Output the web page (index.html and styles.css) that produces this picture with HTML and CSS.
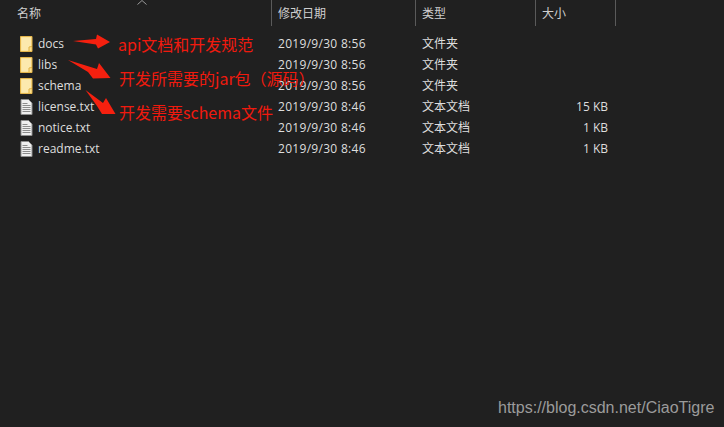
FILE: index.html
```html
<!DOCTYPE html>
<html lang="zh-CN">
<head>
<meta charset="utf-8">
<title>文件列表</title>
<link rel="stylesheet" href="styles.css">
</head>
<body>
<svg width="0" height="0" class="defs">
  <defs>
    <symbol id="folder" viewBox="0 0 13 16">
      <path d="M.5.5h11.500v15H.5z" fill="#fde08c" stroke="#e5b64c"/>
      <path d="M1.500 1.500h9.500v9.500l-2 1v2.500h-7.500z" fill="#fce9ae"/>
      <path d="M9 15v-4l3-.5" fill="none" stroke="#e0b040"/>
    </symbol>
    <symbol id="doc" viewBox="0 0 12 16">
      <path d="M.5.5h7.500l3.500 3.500v11.500h-11z" fill="#f0f0f0" stroke="#8e8e8e"/>
      <path d="M2 4.500h5M2 6.500h8M2 8.500h8M2 10.500h8M2 12.500h8" stroke="#8c8c8c"/>
    </symbol>
  </defs>
</svg>
<main class="explorer">
  <header class="head">
    <div class="hcell hname">名称</div>
    <div class="hcell">修改日期</div>
    <div class="hcell">类型</div>
    <div class="hcell">大小</div>
  </header>
  <svg class="chevron" width="10" height="5" viewBox="0 0 10 5"><path d="M.5 4.500L5 .5l4.500 4" fill="none" stroke="#9a9a9a"/></svg>
  <section class="rows">
    <div class="row"><div class="name"><svg class="ico"><use href="#folder"/></svg>docs</div><div class="cell date">2019/9/30 8:56</div><div class="cell">文件夹</div><div class="size"></div></div>
    <div class="row"><div class="name"><svg class="ico"><use href="#folder"/></svg>libs</div><div class="cell date">2019/9/30 8:56</div><div class="cell">文件夹</div><div class="size"></div></div>
    <div class="row"><div class="name"><svg class="ico"><use href="#folder"/></svg>schema</div><div class="cell date">2019/9/30 8:56</div><div class="cell">文件夹</div><div class="size"></div></div>
    <div class="row"><div class="name"><svg class="ico"><use href="#doc"/></svg>license.txt</div><div class="cell date">2019/9/30 8:46</div><div class="cell">文本文档</div><div class="size">15 KB</div></div>
    <div class="row"><div class="name"><svg class="ico"><use href="#doc"/></svg>notice.txt</div><div class="cell date">2019/9/30 8:46</div><div class="cell">文本文档</div><div class="size">1 KB</div></div>
    <div class="row"><div class="name"><svg class="ico"><use href="#doc"/></svg>readme.txt</div><div class="cell date">2019/9/30 8:46</div><div class="cell">文本文档</div><div class="size">1 KB</div></div>
  </section>
  <svg class="arrows" width="724" height="427" viewBox="0 0 724 427">
    <path d="M73 41L96 39L97 34.500L110 42L98 48.500L96 44.500Z"/>
    <path d="M68 60L97 69L99 63L110.500 78L93 78.500L88 72Z"/>
    <path d="M85.500 90L103 103L106 98L115.500 114L102 114L97 106Z"/>
  </svg>
  <p class="note note1">api文档和开发规范</p>
  <p class="note note2">开发所需要的jar包（源码）</p>
  <p class="note note3">开发需要schema文件</p>
  <p class="mark">https://blog.csdn.net/CiaoTigre</p>
</main>
</body>
</html>
```
FILE: styles.css
```css
html, body {
  margin: 0;
  padding: 0;
  background: #202020;
}
.defs { position: absolute; }
.explorer {
  position: relative;
  width: 724px;
  height: 427px;
  overflow: hidden;
  font-family: "Open Sans", "Noto Sans CJK SC", sans-serif;
  font-size: 12px;
  color: #dedede;
}
.head {
  display: grid;
  grid-template-columns: 272px 144px 120px 80px;
  height: 26px;
}
.hcell {
  border-right: 1px solid #5a5a5a;
  padding-left: 6px;
  padding-top: 1px;
  line-height: 25px;
  color: #cfcfcf;
  box-sizing: border-box;
}
.hname { padding-left: 17px; }
.chevron { position: absolute; left: 137px; top: 0; }
.rows { padding-top: 7px; }
.row {
  display: grid;
  grid-template-columns: 272px 144px 120px 80px;
  height: 21px;
  line-height: 21px;
}
.name {
  display: flex;
  align-items: center;
  padding-left: 20px;
}
.ico { width: 13px; height: 16px; margin-right: 5px; }
.cell { padding-left: 6px; }
.date { letter-spacing: .3px; }
.size { text-align: right; padding-right: 8px; }
.arrows { position: absolute; left: 0; top: 0; fill: #f5200f; }
.note {
  position: absolute;
  margin: 0;
  font-family: "Noto Sans CJK SC", sans-serif;
  font-size: 16px;
  line-height: 20px;
  color: #f01a0e;
  white-space: nowrap;
}
.note1 { left: 118px; top: 34px; }
.note2 { left: 119px; top: 68px; }
.note3 { left: 119px; top: 102px; }
.mark {
  position: absolute;
  margin: 0;
  left: 498px;
  top: 398px;
  font-family: "Liberation Sans", sans-serif;
  font-size: 16px;
  line-height: 20px;
  color: #9b9b9b;
  white-space: nowrap;
}
```
